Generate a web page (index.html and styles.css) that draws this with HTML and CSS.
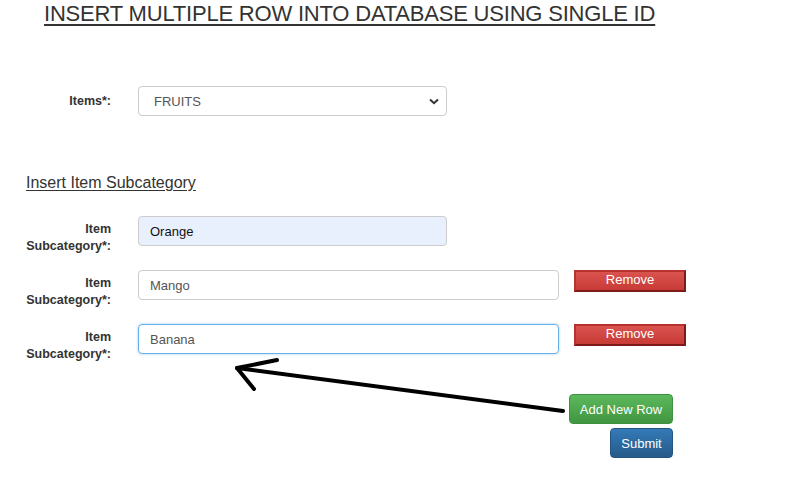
FILE: index.html
```html
<!DOCTYPE html>
<html>
<head>
<meta charset="utf-8">
<link rel="stylesheet" href="styles.css">
</head>
<body>
<div class="page">
  <h2 class="title">INSERT MULTIPLE ROW INTO DATABASE USING SINGLE ID</h2>
  <form class="form">
    <div class="row items-row">
      <label class="label single">Items*:</label>
      <div class="select">
        <span>FRUITS</span>
        <svg class="chev" width="10" height="7" viewBox="0 0 10 7"><path d="M1 1.5 L5 5.2 L9 1.5" fill="none" stroke="#333" stroke-width="2"/></svg>
      </div>
    </div>
    <h4 class="subhead">Insert Item Subcategory</h4>
    <div class="row">
      <label class="label">Item<br>Subcategory*:</label>
      <div class="input short autofill">Orange</div>
    </div>
    <div class="row">
      <label class="label">Item<br>Subcategory*:</label>
      <div class="input long">Mango</div>
      <button type="button" class="remove">Remove</button>
    </div>
    <div class="row">
      <label class="label">Item<br>Subcategory*:</label>
      <div class="input long focus">Banana</div>
      <button type="button" class="remove">Remove</button>
    </div>
    <div class="actions">
      <button type="button" class="btn green">Add New Row</button>
      <button type="button" class="btn blue">Submit</button>
    </div>
  </form>
  <svg class="arrow" width="794" height="478" viewBox="0 0 794 478">
    <g fill="none" stroke="#000" stroke-width="4" stroke-linecap="round" stroke-linejoin="round">
      <path d="M563 411 L237 368"/>
      <path d="M277 360 L237 368 L254 389"/>
    </g>
  </svg>
</div>
</body>
</html>
```
FILE: styles.css
```css
html, body {
  margin: 0;
  padding: 0;
  background: #fff;
}
body {
  font-family: "Liberation Sans", Arial, sans-serif;
  color: #333;
}
.page {
  position: relative;
  width: 794px;
  height: 478px;
  overflow: hidden;
}
.title {
  margin: 0 0 0 44px;
  font-size: 22px;
  font-weight: normal;
  line-height: 28px;
  letter-spacing: -0.2px;
  text-decoration: underline;
  text-underline-offset: 3px;
  text-decoration-thickness: 2px;
  color: #333;
}
.form {
  padding-top: 58px;
}
.row {
  display: flex;
  align-items: flex-start;
  margin-bottom: 15px;
}
.items-row {
  align-items: center;
  margin-bottom: 0;
}
.label {
  width: 111px;
  flex: none;
  text-align: right;
  font-weight: bold;
  font-size: 12.5px;
  line-height: 17px;
  padding-top: 5px;
  margin-right: 27px;
  color: #333;
}
.label.single {
  padding-top: 0;
}
.select {
  width: 309px;
  height: 30px;
  box-sizing: border-box;
  border: 1px solid #ccc;
  border-radius: 4px;
  display: flex;
  align-items: center;
  justify-content: space-between;
  padding: 0 7px 0 15px;
  font-size: 13px;
  color: #555;
}
.subhead {
  margin: 57px 0 23px 26px;
  font-size: 16px;
  font-weight: normal;
  line-height: 20px;
  text-decoration: underline;
  text-underline-offset: 2px;
  color: #333;
}
.input {
  height: 30px;
  box-sizing: border-box;
  border: 1px solid #ccc;
  border-radius: 4px;
  padding: 0 11px;
  display: flex;
  align-items: center;
  font-size: 13px;
  color: #555;
  flex: none;
}
.short { width: 309px; }
.long { width: 421px; }
.autofill {
  background: #e8f0fe;
  color: #111;
}
.focus {
  border-color: #66afe9;
  box-shadow: 0 0 3px rgba(102, 175, 233, 0.6);
}
.remove {
  margin-left: 15px;
  width: 112px;
  height: 22px;
  box-sizing: border-box;
  border-style: solid;
  border-width: 2px;
  border-color: #b8312d #7c1c1a #7c1c1a #b8312d;
  background: linear-gradient(#d9534f, #c83a36);
  color: #fff;
  font-family: "Liberation Sans", Arial, sans-serif;
  font-size: 13px;
  line-height: 16px;
  padding: 0 0 2px;
}
.actions {
  width: 673px;
  display: flex;
  flex-direction: column;
  align-items: flex-end;
  gap: 4px;
  margin-top: 31px;
}
.btn {
  box-sizing: border-box;
  height: 30px;
  border-radius: 4px;
  border: 1px solid;
  color: #fff;
  font-family: "Liberation Sans", Arial, sans-serif;
  font-size: 13px;
  line-height: 17px;
  padding: 0;
  white-space: nowrap;
}
.green {
  width: 104px;
  background: linear-gradient(#5cb85c, #419641);
  border-color: #3e8f3e;
}
.blue {
  width: 63px;
  background: linear-gradient(#337ab7, #265a88);
  border-color: #245580;
}
.arrow {
  position: absolute;
  left: 0;
  top: 0;
  pointer-events: none;
}
```
